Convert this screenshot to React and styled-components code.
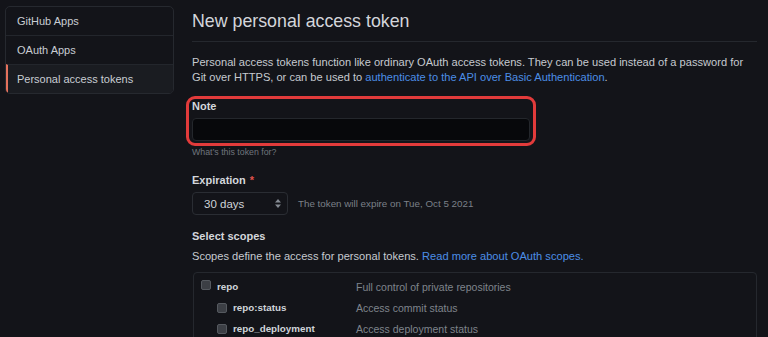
import styled, { createGlobalStyle } from 'styled-components';

const GlobalStyle = createGlobalStyle`
  html, body {
    margin: 0;
    padding: 0;
    background: #131419;
  }
  body {
    font-family: "Liberation Sans", Arial, sans-serif;
    color: #cdd1d7;
    overflow: hidden;
  }
`;

const Page = styled.div`
  display: flex;
  align-items: flex-start;
  gap: 18px;
  width: 768px;
  height: 337px;
  padding: 6px 11px 0 5px;
  box-sizing: border-box;
  overflow: hidden;
`;

const SideMenu = styled.nav`
  width: 169px;
  box-sizing: border-box;
  flex-shrink: 0;
  border: 1px solid #26292f;
  border-radius: 5px;
  overflow: hidden;
`;

const MenuItem = styled.div`
  height: 28px;
  display: flex;
  align-items: center;
  padding-left: ${({ active }) => (active ? '9px' : '11px')};
  font-size: 11px;
  color: #c9cdd3;
  background: ${({ active }) => (active ? '#1a1c21' : 'transparent')};
  border-left: ${({ active }) => (active ? '2px solid #e4715c' : 'none')};
  & + & {
    border-top: 1px solid #23262c;
  }
`;

const Main = styled.main`
  flex: 1;
  margin-top: -6px;
`;

const Title = styled.h1`
  margin: 0;
  padding: 7px 0 6px;
  font-size: 17.8px;
  line-height: 28px;
  font-weight: 400;
  color: #d3d6db;
  border-bottom: 1px solid #25282e;
`;

const Intro = styled.p`
  margin: 13px 0 0;
  font-size: 11.1px;
  line-height: 15px;
  color: #c6cad0;
`;

const Link = styled.a`
  color: #4c8ee6;
  text-decoration: none;
`;

const Highlight = styled.div`
  width: 350px;
  box-sizing: border-box;
  margin: 11px 0 0 -6px;
  padding: 0 3px 2px;
  border: 3px solid #e23b3b;
  border-radius: 9px;
`;

const Label = styled.div`
  font-size: 11px;
  font-weight: 700;
  line-height: 14px;
  margin-top: ${({ top }) => top || 0}px;
  color: #d4d7dc;
`;

const Required = styled.span`
  color: #e0524c;
  margin-left: 4px;
`;

const TextInput = styled.div`
  height: 23px;
  margin-top: 5px;
  background: #07080b;
  border: 1px solid #24272c;
  border-radius: 4px;
  box-sizing: border-box;
`;

const Hint = styled.div`
  font-size: 8.8px;
  line-height: 13px;
  color: #6f757d;
`;

const SelectRow = styled.div`
  display: flex;
  align-items: center;
  gap: 10px;
  margin-top: 5px;
`;

const Select = styled.div`
  width: 96px;
  height: 23px;
  box-sizing: border-box;
  display: flex;
  align-items: center;
  justify-content: space-between;
  padding: 0 6px 0 11px;
  border: 1px solid #2a2d33;
  border-radius: 4px;
  font-size: 11.5px;
  color: #cfd3d8;
`;

const Arrows = styled.svg`
  width: 6px;
  height: 9px;
  fill: #868b93;
`;

const Muted = styled.span`
  font-size: 9.8px;
  color: #7b8088;
`;

const Description = styled.p`
  margin: 6px 0 0;
  font-size: 11.1px;
  line-height: 15px;
  color: #c6cad0;
`;

const ScopeBox = styled.div`
  margin: 8px 0 0 1px;
  padding: 3px 7px 0;
  border: 1px solid #25282e;
  border-radius: 4px;
  height: 72px;
  overflow: hidden;
`;

const ScopeRow = styled.div`
  display: grid;
  grid-template-columns: 155px 1fr;
  align-items: center;
  height: 21px;
`;

const ScopeName = styled.label`
  display: flex;
  align-items: center;
  gap: 6px;
  padding-left: ${({ nested }) => (nested ? 16 : 0)}px;
  font-size: 9.8px;
  font-weight: 700;
  color: #d0d4d9;
`;

const Check = styled.span`
  width: 10px;
  height: 10px;
  box-sizing: border-box;
  border: 1px solid #55595f;
  border-radius: 2px;
  background: #3c3f45;
  margin-top: ${({ nested }) => (nested ? 0 : -4)}px;
`;

const ScopeText = styled.span`
  font-size: 10.5px;
  color: #7f848c;
`;

const scopes = [
  { name: 'repo', text: 'Full control of private repositories' },
  { name: 'repo:status', text: 'Access commit status', nested: true },
  { name: 'repo_deployment', text: 'Access deployment status', nested: true },
];

const App = () => (
  <>
    <GlobalStyle />
    <Page>
      <SideMenu>
        <MenuItem>GitHub Apps</MenuItem>
        <MenuItem>OAuth Apps</MenuItem>
        <MenuItem active>Personal access tokens</MenuItem>
      </SideMenu>
      <Main>
        <Title>New personal access token</Title>
        <Intro>
          Personal access tokens function like ordinary OAuth access tokens. They can be used instead of a password for
          Git over HTTPS, or can be used to <Link href="#">authenticate to the API over Basic Authentication</Link>.
        </Intro>
        <Highlight>
          <Label>Note</Label>
          <TextInput />
        </Highlight>
        <Hint>What’s this token for?</Hint>
        <Label top={14}>
          Expiration<Required>*</Required>
        </Label>
        <SelectRow>
          <Select>
            30 days
            <Arrows viewBox="0 0 6 9">
              <path d="M3 0 L6 3.4 H0 Z M3 9 L0 5.6 H6 Z" />
            </Arrows>
          </Select>
          <Muted>The token will expire on Tue, Oct 5 2021</Muted>
        </SelectRow>
        <Label top={14}>Select scopes</Label>
        <Description>
          Scopes define the access for personal tokens. <Link href="#">Read more about OAuth scopes.</Link>
        </Description>
        <ScopeBox>
          {scopes.map((s) => (
            <ScopeRow key={s.name}>
              <ScopeName nested={s.nested}>
                <Check nested={s.nested} />
                {s.name}
              </ScopeName>
              <ScopeText>{s.text}</ScopeText>
            </ScopeRow>
          ))}
        </ScopeBox>
      </Main>
    </Page>
  </>
);

export default App;
